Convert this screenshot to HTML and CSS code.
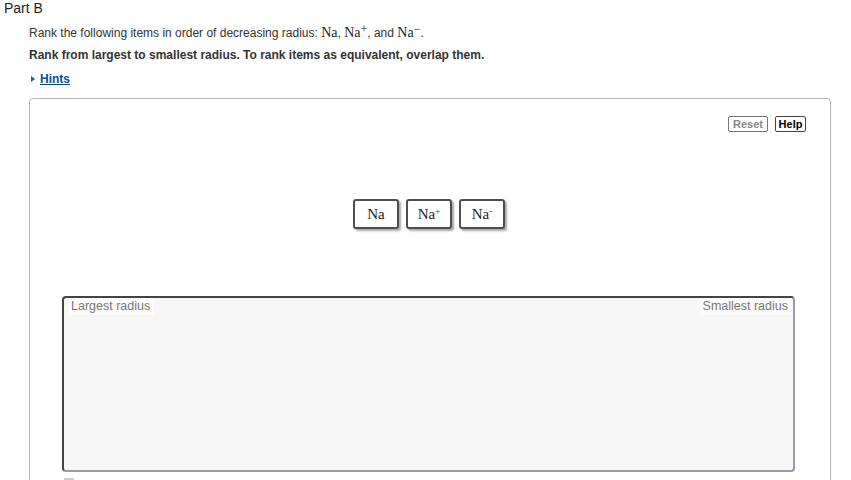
FILE: index.html
```html
<!DOCTYPE html>
<html lang="en">
<head>
    <meta charset="UTF-8">
    <title>Part B</title>
    <link rel="stylesheet" href="styles.css">
</head>
<body>
    <h3 class="part-title">Part B</h3>

    <div class="part-body">
        <p class="question">Rank the following items in order of decreasing radius: <span class="math">Na</span>, <span class="math">Na<sup>+</sup></span>, and <span class="math">Na<sup>&minus;</sup></span>.</p>
        <p class="instructions">Rank from largest to smallest radius. To rank items as equivalent, overlap them.</p>
        <p class="hints"><span class="arrow"></span><a href="#">Hints</a></p>

        <div class="panel">
            <div class="toolbar">
                <button class="btn btn-reset">Reset</button>
                <button class="btn btn-help">Help</button>
            </div>

            <div class="tiles">
                <div class="tile"><span>Na</span></div>
                <div class="tile"><span>Na<sup>+</sup></span></div>
                <div class="tile"><span>Na<sup>-</sup></span></div>
            </div>

            <div class="dropzone">
                <span class="label">Largest radius</span>
                <span class="label">Smallest radius</span>
            </div>
            <div class="below"></div>
        </div>
    </div>
</body>
</html>
```

FILE: styles.css
```css
* {
    margin: 0;
    padding: 0;
    box-sizing: border-box;
}

body {
    font-family: "Liberation Sans", Arial, sans-serif;
    font-size: 12px;
    color: #333;
    background: #fff;
    overflow: hidden;
}

.part-title {
    font-size: 14px;
    font-weight: normal;
    color: #222;
    padding: 0 0 0 4px;
    line-height: 16px;
}

.part-body {
    padding-left: 29px;
}

.question {
    margin-top: 9px;
    line-height: 16px;
}

.math {
    font-family: "Liberation Serif", "Times New Roman", serif;
    font-size: 14px;
    color: #222;
}

.math sup {
    font-size: 12px;
    vertical-align: 4px;
    line-height: 0;
}

.instructions {
    margin-top: 6px;
    font-weight: bold;
    line-height: 16px;
}

.hints {
    margin-top: 8px;
    line-height: 16px;
    display: flex;
    align-items: center;
}

.arrow {
    width: 0;
    height: 0;
    border-top: 3px solid transparent;
    border-bottom: 3px solid transparent;
    border-left: 4px solid #2a5a8c;
    margin: 0 5px 0 2px;
}

.hints a {
    color: #0b4d8f;
    font-weight: bold;
    text-decoration: underline;
}

.panel {
    margin-top: 11px;
    width: 802px;
    height: 400px;
    border: 1px solid #b4b4b4;
    border-radius: 4px;
    padding: 17px 24px 0 32px;
}

.toolbar {
    display: flex;
    justify-content: flex-end;
    gap: 7px;
}

.btn {
    font-family: "Liberation Sans", Arial, sans-serif;
    font-size: 11px;
    font-weight: bold;
    height: 16px;
    line-height: 14px;
    background: #fff;
    border: 1px solid #777;
    border-radius: 2px;
    padding: 0;
}

.btn-reset {
    color: #888;
    width: 40px;
}

.btn-help {
    color: #000;
    border-color: #444;
    width: 31px;
}

.tiles {
    display: flex;
    justify-content: center;
    gap: 7px;
    margin: 67px 0 0 -10px;
}

.tile {
    width: 46px;
    height: 30px;
    border: 2px solid #4d4d55;
    border-radius: 3px;
    box-shadow: 2px 2px 2px #aaa;
    background: #fff;
    font-family: "Liberation Serif", "Times New Roman", serif;
    font-size: 15px;
    color: #222;
    display: flex;
    align-items: center;
    justify-content: center;
}

.tile sup {
    font-size: 9px;
    vertical-align: 5px;
    line-height: 0;
}

.dropzone {
    margin-top: 67px;
    width: 733px;
    height: 176px;
    background: #f7f7f7;
    border: 2px solid #444;
    border-right-color: #9c9aae;
    border-bottom-color: #9c9aae;
    border-radius: 4px;
    display: flex;
    justify-content: space-between;
    align-items: flex-start;
    padding: 0 1px 0 4px;
}

.label {
    background: #fcfcfc;
    color: #777;
    font-size: 12.5px;
    line-height: 17px;
    padding: 0 4px 0 3px;
}

.below {
    width: 10px;
    height: 3px;
    margin: 6px 0 0 2px;
    background: #ccc;
}
```
